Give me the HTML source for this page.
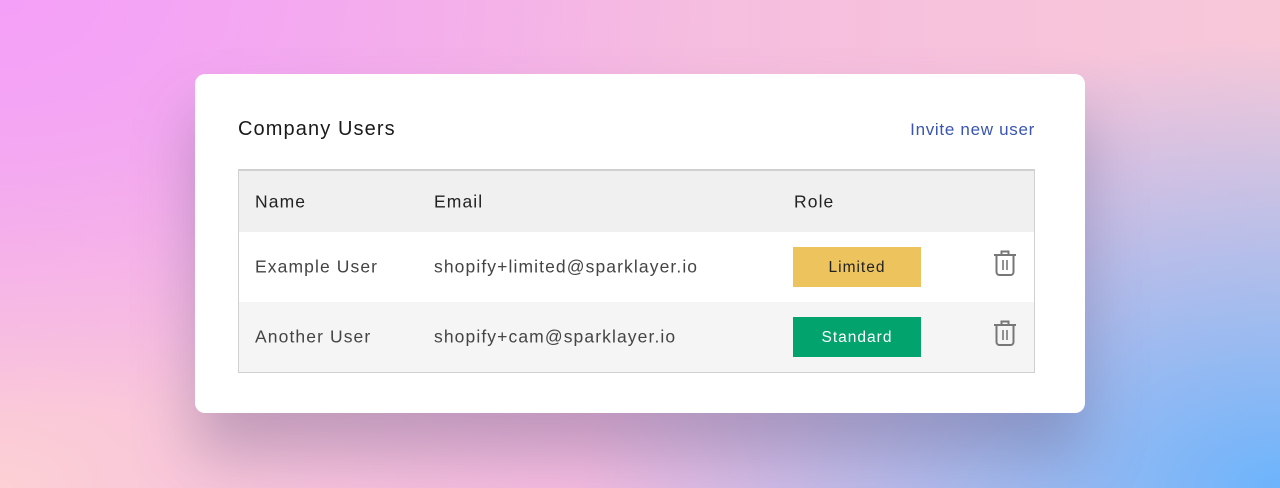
<!DOCTYPE html>
<html><head><style>
*{margin:0;padding:0;box-sizing:border-box}
body{width:1280px;height:488px;overflow:hidden;position:relative;font-family:"Liberation Sans",sans-serif;
background:
radial-gradient(ellipse 700px 420px at 0% 0%, #f4a0f8 0%, rgba(244,160,248,0) 100%),
radial-gradient(ellipse 700px 450px at 100% 100%, #6cb4fc 0%, rgba(108,180,252,0) 100%),
radial-gradient(ellipse 600px 400px at 0% 100%, #fcd0d4 0%, rgba(252,208,212,0) 100%),
linear-gradient(90deg,#f2b0e8,#f8c8d8);}
.card{position:absolute;left:195px;top:74px;width:890px;height:339px;background:#fff;border-radius:10px;box-shadow:0 40px 60px rgba(90,80,120,0.35)}
.title{position:absolute;left:43px;top:44px;font-size:20px;color:#1a1a1a;letter-spacing:1.1px}
.invite{position:absolute;right:50px;top:46px;font-size:17px;color:#3a55b0;letter-spacing:0.7px}
.tbl{position:absolute;left:43px;top:95px;width:797px;height:204px;border:1px solid #d0d0d0;border-top:2px solid #d0d0d0;border-bottom:2px solid #d0d0d0}
.row{position:absolute;left:0;width:795px;font-size:17.5px;color:#444;letter-spacing:1.1px}
.row span{position:absolute;top:50%;transform:translateY(-50%)}
.h{top:0;height:61px;background:#f0f0f0;color:#222}
.r1{top:61px;height:70px;background:#fff}
.r2{top:131px;height:70px;background:#f5f5f5}
.badge{position:absolute;left:554px;width:128px;height:40px;top:15px;font-size:15.5px;text-align:center;line-height:42px;letter-spacing:1px}
.trash{position:absolute;left:753px;top:17px}
</style></head><body>
<div class="card">
<div class="title">Company Users</div>
<div class="invite">Invite new user</div>
<div class="tbl">
<div class="row h"><span style="left:16px">Name</span><span style="left:195px">Email</span><span style="left:555px">Role</span></div>
<div class="row r1"><span style="left:16px">Example User</span><span style="left:195px">shopify+limited@sparklayer.io</span>
<div class="badge" style="background:#ecc35c;color:#222">Limited</div>
<svg class="trash" width="26" height="28" viewBox="0 0 26 28" fill="none" stroke="#777" stroke-width="2"><path d="M2 6h22M9.5 6V2.5h7V6M4.5 6v17a3 3 0 0 0 3 3h11a3 3 0 0 0 3-3V6"/><path d="M11 11v10M15 11v10" stroke-width="1.6"/></svg></div>
<div class="row r2"><span style="left:16px">Another User</span><span style="left:195px">shopify+cam@sparklayer.io</span>
<div class="badge" style="background:#02a36c;color:#fff">Standard</div>
<svg class="trash" width="26" height="28" viewBox="0 0 26 28" fill="none" stroke="#777" stroke-width="2"><path d="M2 6h22M9.5 6V2.5h7V6M4.5 6v17a3 3 0 0 0 3 3h11a3 3 0 0 0 3-3V6"/><path d="M11 11v10M15 11v10" stroke-width="1.6"/></svg></div>
</div>
</div>
</body></html>
